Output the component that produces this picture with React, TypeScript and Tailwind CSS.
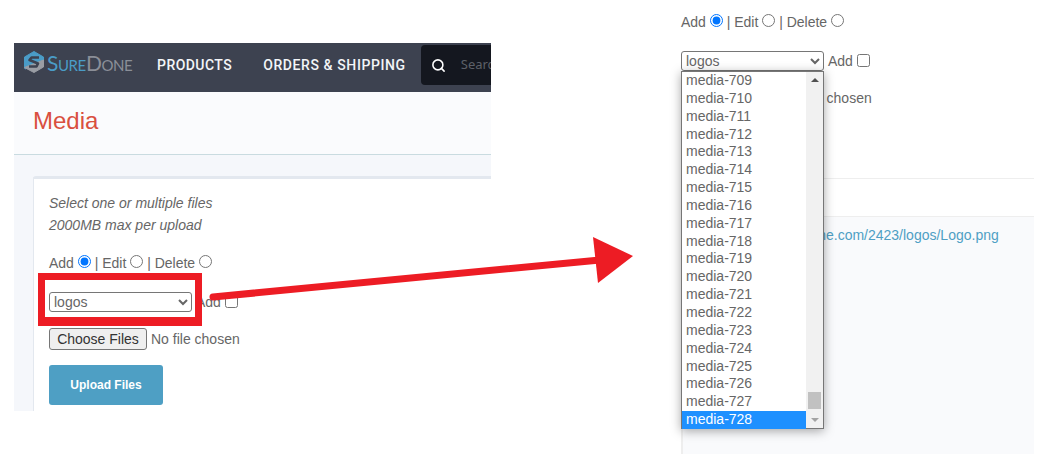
import React from 'react';
import { Search } from 'lucide-react';

const mediaFolders = Array.from({ length: 19 }, (_, i) => `media-${709 + i}`);

const ModeRow: React.FC<{ name: string }> = ({ name }) => (
  <div className="h-[22px] leading-[22px]">
    Add <input type="radio" name={name} defaultChecked /> | Edit <input type="radio" name={name} /> | Delete{' '}
    <input type="radio" name={name} />
  </div>
);

const FolderRow: React.FC = () => (
  <div className="flex items-center h-[20px]">
    <select className="w-[143px] h-[20px] border border-[#767676] rounded-[3px] bg-white text-[#666666]">
      <option>logos</option>
    </select>
    <span className="ml-[4px]">Add</span>
    <input type="checkbox" className="ml-[4px] mb-[2px]" />
  </div>
);

const FileRow: React.FC = () => (
  <div className="flex items-center h-[22px]">
    <button className="w-[98px] h-[22px] border border-[#767676] rounded-[3px] bg-[#efefef] text-[#333333] leading-none">
      Choose Files
    </button>
    <span className="ml-[4px]">No file chosen</span>
  </div>
);

const SureDoneLogo: React.FC = () => (
  <svg width="22" height="24" viewBox="0 0 22 24" className="shrink-0">
    <path d="M11 1.5 L20.5 7 L20.5 12 L2 19 L1.5 17.5 L1.5 7 Z" fill="#4a9cc7" stroke="#4a9cc7" strokeLinejoin="round" />
    <path d="M11 22.5 L1.5 17.5 L20.5 10 L20.5 17 Z" fill="#9a9da4" stroke="#9a9da4" strokeLinejoin="round" />
    <path d="M16 7.5 L8.5 7.5 L6.5 10 L15 13.5 L13.5 16.5 L6 16.5" fill="none" stroke="#3d4250" strokeWidth="2.6" strokeLinejoin="round" />
  </svg>
);

const LeftShot: React.FC = () => (
  <div className="absolute left-[14px] top-[43px] w-[477px] h-[368px] overflow-hidden bg-[#f5f7fb] text-[14px] text-[#666666]">
    <nav className="flex items-center h-[49px] bg-[#3d4250] whitespace-nowrap">
      <div className="flex items-center mb-[11px] ml-[9px] w-[134px] h-[26px] shrink-0">
        <SureDoneLogo />
        <span className="ml-[2px] text-[21px] leading-none tracking-[-0.4px] font-['Lato',sans-serif] [font-variant:small-caps] text-[#4a9cc7]">
          Sure<span className="text-[#8b8f98]">Done</span>
        </span>
      </div>
      <a className="mb-[5px] font-['Roboto',sans-serif] text-[14px] font-medium text-[#f3f5f8] tracking-[0.45px]">PRODUCTS</a>
      <a className="mb-[5px] ml-[31px] font-['Roboto',sans-serif] text-[14px] font-medium text-[#f3f5f8] tracking-[0.6px]">
        ORDERS &amp; SHIPPING
      </a>
      <div className="flex items-center ml-[15px] mb-[5px] w-[90px] h-[40px] shrink-0 rounded-[4px] bg-[#14171f]">
        <Search size={15} strokeWidth={2.5} className="ml-[10px] text-white shrink-0" />
        <span className="ml-[15px] font-['Noto_Sans',sans-serif] text-[13px] text-[#5d6068]">Search</span>
      </div>
    </nav>
    <div className="flex items-center h-[63px] pl-[19px] pb-[4px] bg-[#fafbfd] border-b border-[#c9dbe0]">
      <h1 className="text-[24px] text-[#d9503f]">Media</h1>
    </div>
    <div className="mt-[21px] ml-[19px] h-[300px] pl-[15px] pt-[13px] bg-white border-l border-t-[3px] border-[#e3e8ef] rounded-tl-[3px]">
      <p className="italic leading-[22px]">Select one or multiple files</p>
      <p className="italic leading-[22px]">2000MB max per upload</p>
      <div className="mt-[16px]">
        <ModeRow name="left-mode" />
      </div>
      <div className="mt-[18px]">
        <FolderRow />
      </div>
      <div className="mt-[16px]">
        <FileRow />
      </div>
      <button className="block mt-[15px] w-[114px] h-[40px] rounded-[3px] bg-[#4e9fc4] text-[12px] font-bold text-white">
        Upload Files
      </button>
    </div>
  </div>
);

const RightShot: React.FC = () => (
  <div className="absolute left-[681px] top-0 w-[353px] h-[454px] bg-white text-[14px] text-[#666666]">
    <div className="pt-[11px]">
      <ModeRow name="right-mode" />
    </div>
    <div className="mt-[18px]">
      <FolderRow />
    </div>
    <div className="mt-[16px]">
      <FileRow />
    </div>
    <div className="mt-[69px] h-[38px] border-t border-[#eeeeee]" />
    <div className="h-[238px] pl-[6px] pt-[8px] bg-[#f9fafc] border-t border-l-2 border-[#eeeeee] text-[#4e9fc4] leading-[20px] whitespace-nowrap">
      https://assets.suredone.com/2423/logos/Logo.png
    </div>
  </div>
);

// open dropdown of the folder select, over the right shot
const FolderDropdown: React.FC = () => (
  <div className="absolute left-[681px] top-[71px] flex w-[143px] h-[358px] border border-[#767676] bg-white text-[14px] text-[#666666] shadow-[0_2px_10px_rgba(0,0,0,0.35)]">
    <ul className="flex-1">
      {mediaFolders.map((folder) => (
        <li key={folder} className="h-[17.85px] pl-[4px] leading-[17.85px]">
          {folder}
        </li>
      ))}
      <li className="h-[17.85px] pl-[4px] leading-[17.85px] bg-[#1e90ff] text-white">media-728</li>
    </ul>
    <div className="flex flex-col items-center justify-between w-[17px] pt-[6px] pb-[6px] bg-[#f1f1f1]">
      <div className="border-x-[4px] border-b-[4px] border-x-transparent border-b-[#505050]" />
      <div className="w-[13px] h-[17px] mt-auto mb-[9px] bg-[#c1c1c1]" />
      <div className="border-x-[4px] border-t-[4px] border-x-transparent border-t-[#a3a3a3]" />
    </div>
  </div>
);

const App: React.FC = () => {
  return (
    <div className="relative w-[1042px] h-[454px] overflow-hidden bg-white font-['Liberation_Sans',Arial,sans-serif]">
      <LeftShot />
      <RightShot />
      <FolderDropdown />

      {/* annotations on top of the screenshots */}
      <div className="absolute left-[38px] top-[273px] w-[164px] h-[53px] border-[7px] border-b-[9px] border-[#ed1c24]" />
      <svg className="absolute left-0 top-0" width="1042" height="454" viewBox="0 0 1042 454">
        <line x1="213" y1="297" x2="600" y2="260" stroke="#ed1c24" strokeWidth="7" strokeLinecap="round" />
        <polygon points="593,237 633,256 598,283" fill="#ed1c24" />
      </svg>
    </div>
  );
};

export default App;
